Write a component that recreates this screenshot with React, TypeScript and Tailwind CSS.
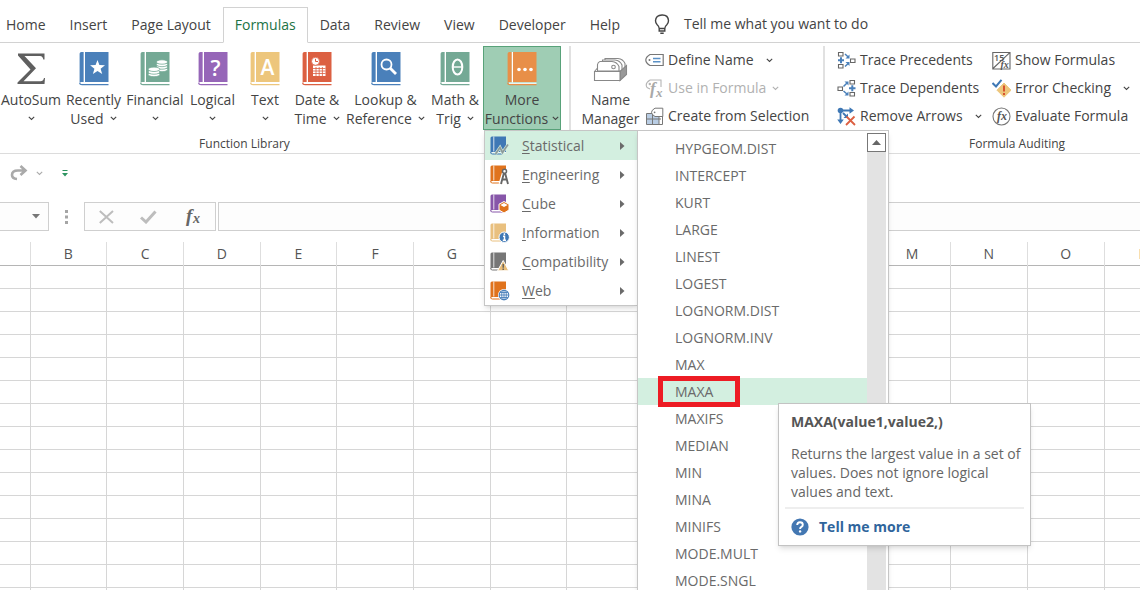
import type { ReactNode } from 'react';

const tabs = ['Home', 'Insert', 'Page Layout', 'Formulas', 'Data', 'Review', 'View', 'Developer', 'Help'];

const statistical = [
  'HYPGEOM.DIST', 'INTERCEPT', 'KURT', 'LARGE', 'LINEST', 'LOGEST', 'LOGNORM.DIST', 'LOGNORM.INV', 'MAX',
  'MAXA', 'MAXIFS', 'MEDIAN', 'MIN', 'MINA', 'MINIFS', 'MODE.MULT', 'MODE.SNGL',
];

const columns = ['B', 'C', 'D', 'E', 'F', 'G', 'H', 'I', 'J', 'K', 'L', 'M', 'N', 'O'];
const rows = Array.from({ length: 15 }, (_, i) => i + 1);

function Chevron({ className = '' }: { className?: string }) {
  return (
    <svg className={`inline-block shrink-0 ${className}`} width="7" height="5" viewBox="0 0 7 5" fill="none" stroke="currentColor" strokeWidth="1.1">
      <path d="M.8 .8 3.5 3.4 6.2 .8" />
    </svg>
  );
}

function Book({ color, children }: { color: string; children?: ReactNode }) {
  return (
    <svg width="30" height="34" viewBox="0 0 30 34" className="shrink-0">
      <path d="M2.5 0H29.5V30H6V0H4.8V30H2.6C1.6 30 1 30.6 .6 31.4V2C.6 .8 1.3 0 2.5 0Z" fill={color} />
      <path d="M5.4 0V30.5" stroke="#fff" strokeWidth="1.2" />
      <path d="M29.5 32.6H3C1.6 32.6 .8 32 .6 31.2" stroke={color} strokeWidth="1.3" fill="none" />
      <path d="M2 31.2H29.5" stroke="#fff" strokeWidth="1.2" />
      {children}
    </svg>
  );
}

function SmallBook({ color, children }: { color: string; children?: ReactNode }) {
  return (
    <svg width="20" height="20" viewBox="0 0 20 20" className="shrink-0">
      <path d="M2 .5H16V16H2.5L.5 17.5V2Q.5 .5 2 .5Z" fill={color} />
      <path d="M3.8 .5V15.5M1.4 16.6H16" stroke="#fff" strokeWidth=".8" fill="none" />
      <path d="M.5 16.5Q1 18 2.4 18H13" stroke={color} strokeWidth="1" fill="none" />
      {children}
    </svg>
  );
}

function Coins() {
  return (
    <g fill="#fff" stroke="#74a995" strokeWidth=".8">
      <ellipse cx="22" cy="17.5" rx="5.7" ry="2.2" />
      <ellipse cx="22" cy="15" rx="5.7" ry="2.2" />
      <ellipse cx="22" cy="12.5" rx="5.7" ry="2.2" />
      <ellipse cx="22" cy="10" rx="5.7" ry="2.2" />
      <ellipse cx="14" cy="22.5" rx="5.9" ry="2.2" />
      <ellipse cx="14" cy="20" rx="5.9" ry="2.2" />
      <ellipse cx="14" cy="17.3" rx="5.9" ry="2.2" />
    </g>
  );
}

function Calendar() {
  return (
    <g>
      <path d="M11 13.5H23.5V24H11Z" fill="#fff" />
      <path d="M11 16.5H23.5M11 19H23.5M11 21.5H23.5M14 15V24M17.2 15V24M20.4 15V24" stroke="#dc6042" strokeWidth=".8" />
      <circle cx="13.5" cy="9.3" r="4" fill="#fff" stroke="#dc6042" strokeWidth=".8" />
      <path d="M13.5 6.8V9.5H16" stroke="#dc6042" strokeWidth="1" fill="none" />
    </g>
  );
}

const bigButtons = [
  {
    lines: ['AutoSum', ''], width: 'w-[62px]',
    icon: (
      <svg width="30" height="34" viewBox="0 0 30 34">
        <path d="M2 1.5H28.5V7.5H27.3Q26.8 4 24 4H8.5L20 16.3 7.5 29.2H24.5Q27.2 29.2 28 26H29L28.5 32H1.5V30.5L14.5 17.5 2 3.5Z" fill="#5f5f5f" />
      </svg>
    ),
  },
  {
    lines: ['Recently', 'Used'], width: 'w-[63px]',
    icon: <Book color="#4a80ba"><path d="M18.5 8 20.4 13.1 26 13.3 21.6 16.7 23.2 22 18.5 18.9 13.9 22 15.4 16.7 11.1 13.3 16.6 13.1Z" fill="#fff" /></Book>,
  },
  { lines: ['Financial', ''], width: 'w-[60px]', icon: <Book color="#74a995"><Coins /></Book> },
  {
    lines: ['Logical', ''], width: 'w-[55px]',
    icon: <Book color="#9666b8"><text x="17.5" y="23.5" textAnchor="middle" fontSize="22" fontWeight="600" fill="#fff">?</text></Book>,
  },
  {
    lines: ['Text', ''], width: 'w-[50px]',
    icon: <Book color="#edc67c"><text x="17.5" y="23" textAnchor="middle" fontSize="21" fontWeight="600" fill="#fff">A</text></Book>,
  },
  { lines: ['Date &', 'Time'], width: 'w-[54px]', icon: <Book color="#dc6042"><Calendar /></Book> },
  {
    lines: ['Lookup &', 'Reference'], width: 'w-[83px]',
    icon: (
      <Book color="#4a80ba">
        <circle cx="15.5" cy="12.5" r="5" fill="none" stroke="#fff" strokeWidth="1.8" />
        <path d="M19 16 25 22" stroke="#fff" strokeWidth="2.8" />
      </Book>
    ),
  },
  {
    lines: ['Math &', 'Trig'], width: 'w-[56px]',
    icon: (
      <Book color="#74a995">
        <ellipse cx="17.5" cy="15" rx="4.8" ry="7.6" fill="none" stroke="#fff" strokeWidth="2" />
        <path d="M13 15H22" stroke="#fff" strokeWidth="1.4" />
      </Book>
    ),
  },
];

function BigButton({ icon, lines, width }: { icon: ReactNode; lines: string[]; width: string }) {
  return (
    <button className={`flex h-21 shrink-0 flex-col items-center pt-1.5 ${width}`}>
      {icon}
      <span className="mt-1 whitespace-nowrap leading-[19px]">{lines[0]}</span>
      <span className="flex h-[19px] items-center whitespace-nowrap leading-[19px]">
        {lines[1]}
        <Chevron className={lines[1] ? 'ml-1.5' : ''} />
      </span>
    </button>
  );
}

const globe = (
  <g>
    <circle cx="14" cy="14" r="4.8" fill="#fff" stroke="#4a80ba" strokeWidth="1.1" />
    <path d="M9.2 14H18.8M14 9.2V18.8M10.2 11.5H17.8M10.2 16.5H17.8" stroke="#4a80ba" strokeWidth=".9" />
    <ellipse cx="14" cy="14" rx="2.3" ry="4.8" fill="none" stroke="#4a80ba" strokeWidth=".9" />
  </g>
);

const moreItems = [
  {
    label: 'Statistical',
    icon: <SmallBook color="#3f78b5"><path d="M5.5 18 10 11.5 12.5 16.5 18 8.5" fill="none" stroke="#d3efe0" strokeWidth="3" /><path d="M5.5 18 10 11.5 12.5 16.5 18 8.5" fill="none" stroke="#8c9a9a" strokeWidth="1.7" /></SmallBook>,
  },
  {
    label: 'Engineering',
    icon: (
      <SmallBook color="#e0731d">
        <path d="M14.5 6 10.5 19M14.5 6 18.2 19M11.5 14H17.5" stroke="#fff" strokeWidth="4" fill="none" />
        <path d="M14.2 7 11 19M14.8 7 18 19M12 14.5H17" stroke="#666" strokeWidth="1.9" fill="none" />
        <circle cx="14.5" cy="6.3" r="2" fill="#fff" stroke="#666" strokeWidth="1.5" />
      </SmallBook>
    ),
  },
  {
    label: 'Cube',
    icon: (
      <SmallBook color="#8756a9">
        <path d="M14 7.5 19 10.2V16L14 19 9 16V10.2Z" fill="#e0731d" stroke="#fff" />
        <path d="M14 9 17.6 11 14 13 10.4 11Z" fill="#fff" />
      </SmallBook>
    ),
  },
  {
    label: 'Information',
    icon: (
      <SmallBook color="#e9c07f">
        <circle cx="14.2" cy="14.2" r="5.2" fill="#3f78b5" stroke="#fff" />
        <path d="M14.4 10.3V12M13 13.2H14.5V17M12.8 17.2H16" stroke="#fff" strokeWidth="1.5" fill="none" />
      </SmallBook>
    ),
  },
  {
    label: 'Compatibility',
    icon: (
      <SmallBook color="#777">
        <path d="M13.2 8.5 18.8 18.8H7.5Z" fill="#e9bd78" stroke="#fff" />
        <path d="M13.2 12V15.7M13.2 16.6V18" stroke="#555" strokeWidth="1.3" />
      </SmallBook>
    ),
  },
  { label: 'Web', icon: <SmallBook color="#e0731d"><circle cx="14" cy="14" r="6" fill="#fff" />{globe}</SmallBook> },
];

function Tooltip() {
  return (
    <div role="tooltip" className="absolute top-[272px] left-[140px] z-30 w-[253px] border border-[#c3c3c3] bg-white px-1.5 pt-2 text-[#666] shadow-md">
      <p className="pl-1.5 leading-5 font-bold text-[#555]">MAXA(value1,value2,)</p>
      <p className="mt-3 pb-1.5 pl-1.5 leading-[19px]">
        Returns the largest value in a set of values. Does not ignore logical values and text.
      </p>
      <a href="#help" className="flex h-[38px] items-center gap-2.5 border-t-2 border-[#eee] px-1.5 font-bold text-[#2f659c]">
        <svg width="18" height="18" viewBox="0 0 18 18">
          <circle cx="9" cy="9" r="8.6" fill="#4377b2" />
          <path d="M6.2 7Q6.2 4.2 9 4.2T11.8 6.7Q11.8 8 10.4 8.9 9.1 9.7 9.1 11" fill="none" stroke="#fff" strokeWidth="1.9" />
          <circle cx="9.1" cy="13.4" r="1.2" fill="#fff" />
        </svg>
        Tell me more
      </a>
    </div>
  );
}

function StatisticalMenu() {
  return (
    <div className="absolute -top-px left-full z-20 w-[252px] border border-[#c6c6c6] bg-white shadow-md">
      <div className="flex">
        <ul className="min-w-0 flex-1 py-1">
          {statistical.map((name) => (
            <li key={name} className="relative">
              <button className={`block h-[27px] w-full pl-[37px] text-left ${name === 'MAXA' ? 'bg-[#d3efe0]' : ''}`}>{name}</button>
              {name === 'MAXA' && <span className="absolute -inset-y-0.5 left-5 w-[82px] border-5 border-[#ed1c24]" />}
            </li>
          ))}
        </ul>
        <div className="mt-0.5 mr-0.5 w-[19px] bg-[#e3e3e3]">
          <button aria-label="Scroll up" className="flex h-[19px] w-full items-center justify-center border border-[#777] bg-white">
            <svg width="9" height="5" viewBox="0 0 9 5"><path d="M0 5 4.5 0 9 5Z" fill="#666" /></svg>
          </button>
        </div>
      </div>
      <Tooltip />
    </div>
  );
}

function MoreFunctionsMenu() {
  return (
    <ul className="absolute top-full left-px z-10 w-[154px] border border-[#c6c6c6] bg-white text-[#6a6a6a] shadow-md">
      {moreItems.map(({ label, icon }) => (
        <li key={label} className={label === 'Statistical' ? 'relative bg-[#d3efe0]' : ''}>
          <button className="flex h-[29px] w-full items-center pr-3 pl-[5px]">
            {icon}
            <span className="ml-3"><span className="underline underline-offset-2">{label[0]}</span>{label.slice(1)}</span>
            <svg className="ml-auto" width="5" height="8" viewBox="0 0 5 8"><path d="M0 0 4.5 4 0 8Z" fill="#6a6a6a" /></svg>
          </button>
          {label === 'Statistical' && <StatisticalMenu />}
        </li>
      ))}
    </ul>
  );
}

function SmallButton({ icon, label, menu = '', disabled = false }: { icon: ReactNode; label: string; menu?: string; disabled?: boolean }) {
  return (
    <button disabled={disabled} className={`flex h-7 items-center whitespace-nowrap ${disabled ? 'text-[#b1b1b1]' : ''}`}>
      <svg className="mr-1 shrink-0" width="19" height="19" viewBox="0 0 19 19" fill="none">{icon}</svg>
      {label}
      {menu && <Chevron className={menu} />}
    </button>
  );
}

const defineIcon = (
  <g stroke="#777">
    <path d="M5 3.5H18.2V14.5H5Q.8 12 .8 9T5 3.5Z" fill="#fff" strokeWidth="1.2" />
    <circle cx="4.5" cy="9" r="1" fill="#777" stroke="none" />
    <path d="M8 7.5H15.5M8 10.8H15.5" stroke="#5b91c6" strokeWidth="1.4" />
  </g>
);

const useIcon = (
  <g>
    <path d="M5 1H16V8M2 8.5Q-.5 4.5 5 1M2 8.5 5 10" stroke="#b5b5b5" strokeWidth="1.1" />
    <circle cx="4.8" cy="5" r="1.2" fill="#b5b5b5" />
    <text x="5" y="15" fontFamily="Liberation Serif, serif" fontStyle="italic" fontSize="17" fontWeight="700" fill="#a9a9a9">f</text>
    <text x="11" y="17.5" fontFamily="Liberation Serif, serif" fontStyle="italic" fontSize="13" fontWeight="700" fill="#a9a9a9">x</text>
  </g>
);

const createIcon = (
  <g>
    <path d="M1.5 6.5H14V17.5H1.5Z" fill="#b9cde4" stroke="#777" />
    <path d="M1.5 12H16M7.5 6.5V17.5" stroke="#777" />
    <path d="M10 1.2H17.8V9.5H10Q6.5 7.5 6.5 5.3T10 1.2Z" fill="#fff" stroke="#777" />
    <path d="M12.5 9.5H17.5V17.5H12.5" stroke="#777" />
    <circle cx="9.6" cy="5.3" r=".9" fill="#777" />
  </g>
);

const precedentsIcon = (
  <g>
    <path d="M1.5 1.5H6V5H1.5ZM1.5 13.5H6V17H1.5ZM13.5 8H18V11.5H13.5Z" stroke="#666" strokeWidth="1.1" />
    <path d="M1 9.3H7M4 6.3V12.3" stroke="#4a80ba" strokeWidth="2" />
    <path d="M8 3 11.5 6.2M8 15.5 11.5 12.3" stroke="#4a80ba" strokeWidth="1.5" />
    <path d="M12.5 3.5V7.5H8.5ZM12.5 15V11H8.5Z" fill="#4a80ba" />
  </g>
);

const dependentsIcon = (
  <g>
    <path d="M1 8H5.5V11.5H1ZM13 1.5H17.5V5H13ZM13 13.5H17.5V17H13Z" stroke="#666" strokeWidth="1.1" />
    <path d="M12 9.3H18.5M15.3 6.3V12.3" stroke="#4a80ba" strokeWidth="2" />
    <path d="M6.5 7.5 10 4M6.5 12 10 15" stroke="#4a80ba" strokeWidth="1.5" />
    <path d="M7.5 2.5H11.5V6.5ZM11.5 12.5V16.5H7.5Z" fill="#4a80ba" />
  </g>
);

const removeIcon = (
  <g>
    <circle cx="3.5" cy="3.5" r="2.8" fill="#3f78b5" />
    <path d="M3.5 3.5H14M3.5 3.5V14M6 6 10 10" stroke="#3f78b5" strokeWidth="1.8" />
    <path d="M12.5 .2 17 3.5 12.5 6.8ZM.2 12.5 3.5 17 6.8 12.5ZM11 6.5V11H6.5Z" fill="#3f78b5" />
    <path d="M9.5 9.5 18 18M17.5 9.5 9 18" stroke="#dc6042" strokeWidth="1.8" />
  </g>
);

const showIcon = (
  <g>
    <path d="M.8 1.5H18V18H.8ZM17.5 1.8 1 17.5" stroke="#666" strokeWidth="1.1" />
    <text x="2" y="9.5" fontSize="9" fontWeight="600" fill="#555">15</text>
    <text x="8.5" y="16.5" fontFamily="Liberation Serif, serif" fontStyle="italic" fontWeight="700" fontSize="10" fill="#555">fx</text>
  </g>
);

const errorIcon = (
  <g>
    <path d="M12 4 19 11.2 12 18.2 5 11.2Z" fill="#edc67c" stroke="#edc67c" strokeWidth="1" />
    <path d="M12 6.5V12.5M12 14V16" stroke="#d9532e" strokeWidth="2" />
    <path d="M.5 4 4 7.5 9.5 .8" stroke="#3f78b5" strokeWidth="2" />
  </g>
);

const evaluateIcon = (
  <g>
    <circle cx="9.5" cy="9.5" r="8.5" stroke="#777" strokeWidth="1.1" />
    <text x="5" y="13" fontFamily="Liberation Serif, serif" fontStyle="italic" fontWeight="700" fontSize="12" fill="#555">fx</text>
  </g>
);

function TabBar() {
  return (
    <nav className="flex h-[43px] shrink-0 items-end border-b border-[#d2d2d2]">
      <div className="-mb-px -ml-1.5 flex">
        {tabs.map((tab) => (
          <button
            key={tab}
            className={`h-9 border px-[11px] whitespace-nowrap ${tab === 'Formulas' ? 'border-[#d2d2d2] border-b-white bg-white text-[#217346]' : 'border-transparent'}`}
          >
            {tab}
          </button>
        ))}
      </div>
      <button className="ml-[22px] flex h-9 items-center gap-3.5 whitespace-nowrap">
        <svg width="16" height="21" viewBox="0 0 16 21" fill="none" stroke="#444" strokeWidth="1.4">
          <path d="M5.2 14.5Q5.2 12.5 3.2 10.7 1.5 9 1.5 6.8 1.8 1.2 8 1T14.5 6.8Q14.5 9 12.8 10.7 10.8 12.5 10.8 14.5ZM5.2 14.5V17H10.8V14.5M6.3 19.3H9.7" />
        </svg>
        Tell me what you want to do
      </button>
    </nav>
  );
}

function Ribbon() {
  return (
    <div className="flex h-[111px] shrink-0 border-b border-[#dcdcdc] pt-[3px]">
      <section className="shrink-0">
        <div className="flex">
          {bigButtons.map((b) => <BigButton key={b.lines[0]} {...b} />)}
          <div className="relative z-20">
            <button className="flex h-21 w-[78px] flex-col items-center border border-[#58a279] bg-[#9fcdb4] pt-[5px]">
              <Book color="#e88f48">
                <circle cx="12" cy="17.5" r="1.8" fill="#fff" />
                <circle cx="18" cy="17.5" r="1.8" fill="#fff" />
                <circle cx="24" cy="17.5" r="1.8" fill="#fff" />
              </Book>
              <span className="mt-1 leading-[19px]">More</span>
              <span className="flex items-center leading-[19px]">Functions<Chevron className="ml-1" /></span>
            </button>
            <MoreFunctionsMenu />
          </div>
        </div>
        <h2 className="pt-1 pr-[72px] text-center text-xs leading-5">Function Library</h2>
      </section>

      <section className="ml-2 flex h-21 shrink-0 border-l-2 border-[#e1e1e1] pl-2">
        <button className="flex w-[63px] flex-col items-center pt-1.5">
          <svg width="36" height="34" viewBox="0 0 36 34" fill="#fff" stroke="#888" strokeWidth="1.1">
            <path d="M12 6.5H25Q30 7 32 11.5V19H12Z" />
            <path d="M9.5 8H22Q27 8.5 29 13V19H9.5Z" />
            <path d="M7 9.5H19Q24 10 26 14.5V19H4.5V12.5Q5 10 7 9.5Z" />
            <circle cx="20.5" cy="15" r="1.8" />
            <path d="M27 19.5 33.5 13.5V22.5L27 28.5Z" fill="#999" />
            <path d="M1.5 19.5H27V28.5H1.5ZM1.5 19.5 4.5 16" />
          </svg>
          <span className="mt-1 leading-[19px]">Name</span>
          <span className="leading-[19px]">Manager</span>
        </button>
        <div className="ml-[3px] w-[180px] border-r-2 border-[#e1e1e1]">
          <SmallButton icon={defineIcon} label="Define Name" menu="ml-3" />
          <SmallButton icon={useIcon} label="Use in Formula" menu="ml-1.5" disabled />
          <SmallButton icon={createIcon} label="Create from Selection" />
        </div>
      </section>

      <section className="min-w-0 flex-1 pl-3">
        <div className="flex h-21 gap-3">
          <div className="w-[143px] shrink-0">
            <SmallButton icon={precedentsIcon} label="Trace Precedents" />
            <SmallButton icon={dependentsIcon} label="Trace Dependents" />
            <SmallButton icon={removeIcon} label="Remove Arrows" menu="ml-3" />
          </div>
          <div>
            <SmallButton icon={showIcon} label="Show Formulas" />
            <SmallButton icon={errorIcon} label="Error Checking" menu="ml-3" />
            <SmallButton icon={evaluateIcon} label="Evaluate Formula" />
          </div>
        </div>
        <h2 className="pt-1 pl-[132px] text-xs leading-5">Formula Auditing</h2>
      </section>
    </div>
  );
}

function FormulaBar() {
  return (
    <>
      <div className="flex h-12 shrink-0 items-center px-2.5 pb-2.5">
        <button aria-label="Redo">
          <svg width="18" height="16" viewBox="0 0 18 16" fill="none" stroke="#aaa" strokeWidth="2.6">
            <path d="M7 14Q2 13.5 2 10 2 5.5 8 5.5H15M10.5 1 15.5 5.5 10.5 10" />
          </svg>
        </button>
        <button aria-label="Redo options" className="ml-2 flex text-[#aaa]"><Chevron /></button>
        <button aria-label="Customize toolbar" className="ml-[19px]">
          <svg width="6" height="7" viewBox="0 0 6 7" fill="#2e9561"><path d="M.5 0H5.5V1H.5ZM0 3H6L3 6.5Z" /></svg>
        </button>
      </div>
      <div className="flex h-[29px] shrink-0">
        <button aria-label="Name box" className="flex w-[49px] items-center justify-end border border-l-0 border-[#cfcfcf] bg-[#fdfdfd] pr-2">
          <svg width="8" height="5" viewBox="0 0 8 5"><path d="M0 0H8L4 4.5Z" fill="#777" /></svg>
        </button>
        <svg className="mx-4 self-center" width="3" height="14" viewBox="0 0 3 14" fill="#a5a5a5"><path d="M0 0H3V3H0ZM0 5.5H3V8.5H0ZM0 11H3V14H0Z" /></svg>
        <div className="flex w-[132px] items-center justify-between border border-[#cfcfcf] bg-[#fdfdfd] px-3.5">
          <button aria-label="Cancel">
            <svg width="15" height="14" viewBox="0 0 15 14" stroke="#bdbdbd" strokeWidth="2"><path d="M.8 1 14 13M14 1 .8 13" /></svg>
          </button>
          <button aria-label="Enter">
            <svg width="17" height="14" viewBox="0 0 17 14" fill="none" stroke="#bdbdbd" strokeWidth="3"><path d="M1 7.5 6 12 15.5 1.5" /></svg>
          </button>
          <button aria-label="Insert function">
            <svg width="18" height="24" viewBox="0 0 18 24" fill="#666" fontFamily="Liberation Serif, serif" fontStyle="italic" fontWeight="700">
              <text x="3" y="17" fontSize="19">f</text>
              <text x="10" y="18" fontSize="14">x</text>
            </svg>
          </button>
        </div>
        <input aria-label="Formula" className="ml-0.5 min-w-0 flex-1 border border-r-0 border-[#cfcfcf] bg-[#fdfdfd] px-2 outline-none" />
      </div>
    </>
  );
}

function Sheet() {
  return (
    <table className="mt-[11px] w-full table-fixed border-collapse">
      <thead>
        <tr className="h-[23px] border-b border-[#b5b5b5] text-[#555]">
          <th className="w-[30px] border-r border-[#dedede]" />
          {columns.map((c) => <th key={c} className="border-r border-[#dedede] p-0 pt-0.5 text-center leading-5 font-normal">{c}</th>)}
          <th className="w-9 overflow-hidden p-0 pt-0.5 pl-[34px] text-left leading-5 font-normal">P</th>
        </tr>
      </thead>
      <tbody>
        {rows.map((r) => (
          <tr key={r} className="h-[23px] border-b border-[#d6d6d6]">
            <td className="border-r border-[#d6d6d6]" />
            {columns.map((c) => <td key={c} className="border-r border-[#d6d6d6]" />)}
            <td />
          </tr>
        ))}
      </tbody>
    </table>
  );
}

export default function App() {
  return (
    <div className="flex h-screen flex-col overflow-hidden bg-white font-['Open_Sans','Noto_Sans',sans-serif] text-sm text-[#444]">
      <TabBar />
      <Ribbon />
      <FormulaBar />
      <Sheet />
    </div>
  );
}
